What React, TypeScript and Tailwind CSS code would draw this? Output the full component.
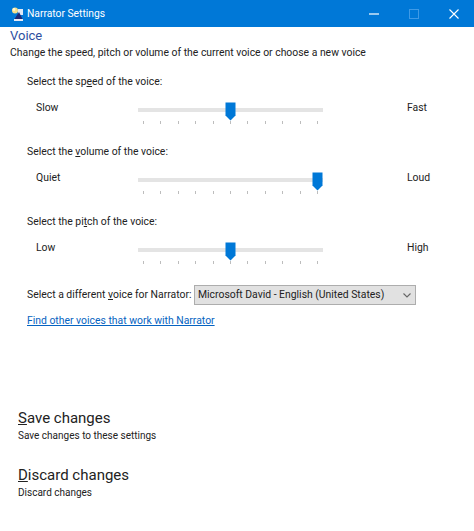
const font = { fontFamily: 'Roboto, "Noto Sans", sans-serif' };

function Thumb({ pct }: { pct: number }) {
  return (
    <svg
      width="11"
      height="19"
      viewBox="0 0 11 19"
      className="absolute top-[-6px] -ml-[5.5px]"
      style={{ left: `${pct}%` }}
    >
      <path d="M0.5 0.5H10.5V13.5L5.5 18.5L0.5 13.5Z" fill="#0078d7" />
    </svg>
  );
}

function SliderRow({ ul, rest, pre, low, high, pct }: { pre: string; ul: string; rest: string; low: string; high: string; pct: number }) {
  return (
    <section className="pl-[27px]">
      <p className="text-[10.4px] leading-[18px] text-[#222]">
        {pre}
        <span className="underline">{ul}</span>
        {rest}
      </p>
      <div className="mt-[6px] flex h-[28px] items-start pl-[9px] text-[10.4px] leading-[16px] text-[#222]">
        <span className="mt-[3px] w-[102px] shrink-0">{low}</span>
        <div className="mt-[11px] w-[185px] shrink-0">
          <div className="relative h-[4px] bg-[#e4e4e4]">
            <Thumb pct={pct} />
          </div>
          <div className="mt-[9px] flex justify-between px-[5px]">
            {[0, 1, 2, 3, 4, 5, 6, 7, 8, 9, 10].map((i) => (
              <span key={i} className="h-[3px] w-px bg-[#bdbdbd]" />
            ))}
          </div>
        </div>
        <span className="ml-[84px] mt-[3px]">{high}</span>
      </div>
    </section>
  );
}

export default function App() {
  return (
    <div className="flex h-[531px] w-[474px] flex-col overflow-hidden bg-white" style={font}>
      <header className="flex h-[27px] shrink-0 items-center bg-[#0078d7] text-white">
        <svg width="16" height="16" viewBox="0 0 16 16" className="ml-[8px]">
          <path d="M10 3h5v6h-5z" fill="#dfe9f7" />
          <circle cx="7" cy="4.5" r="3" fill="#f6e08a" />
          <circle cx="6" cy="3.5" r="1.4" fill="#fff8d8" />
          <path d="M11 6l3.5 7h-8z" fill="#1d2a78" />
          <path d="M6 13h9v2H6z" fill="#e6ebf6" />
        </svg>
        <span className="ml-[3px] text-[10.3px]">Narrator Settings</span>
        <div className="ml-auto flex items-center">
          <svg width="10" height="10" viewBox="0 0 10 10" className="mr-[30px]">
            <path d="M0 5h10" stroke="#fff" strokeWidth="1.2" />
          </svg>
          <svg width="10" height="10" viewBox="0 0 10 10" className="mr-[30px]">
            <rect x="0.5" y="0.5" width="9" height="9" fill="none" stroke="#3f9ae6" />
          </svg>
          <svg width="10" height="10" viewBox="0 0 10 10" className="mr-[15px]">
            <path d="M0.5 0.5l9 9M9.5 0.5l-9 9" stroke="#fff" strokeWidth="1.1" />
          </svg>
        </div>
      </header>

      <main className="flex flex-1 flex-col">
        <div className="pl-[10px]">
          <h1 className="text-[13px] leading-[18px] font-normal text-[#2f4f9f]">Voice</h1>
          <p className="text-[10.4px] leading-[15px] text-[#222]">
            Change the speed, pitch or volume of the current voice or choose a new voice
          </p>
        </div>

        <div className="mt-[13px] flex flex-col gap-[18px]">
          <SliderRow pre="Select the sp" ul="e" rest="ed of the voice:" low="Slow" high="Fast" pct={50} />
          <SliderRow pre="Select the " ul="v" rest="olume of the voice:" low="Quiet" high="Loud" pct={97} />
          <SliderRow pre="Select the pi" ul="t" rest="ch of the voice:" low="Low" high="High" pct={50} />
        </div>

        <div className="mt-[20px] flex items-center pl-[27px] text-[10.4px] text-[#222]">
          <span className="whitespace-nowrap">
            Select a different <span className="underline">v</span>oice for Narrator:
          </span>
          <div className="ml-auto mr-[58px] flex h-[20px] w-[222px] shrink-0 items-center justify-between border border-[#adadad] bg-[#e1e1e1] pl-[3px] pr-[4px]">
            <span className="whitespace-nowrap">Microsoft David - English (United States)</span>
            <svg width="8" height="5" viewBox="0 0 8 5">
              <path d="M0.5 0.5l3.5 3.5 3.5-3.5" fill="none" stroke="#666" strokeWidth="1.1" />
            </svg>
          </div>
        </div>

        <a className="mt-[7px] ml-[27px] text-[10.4px] leading-[18px] text-[#0563c1] underline">
          Find other voices that work with Narrator
        </a>

        <div className="mt-[79px] pl-[18px] text-[#222]">
          <h2 className="text-[15px] leading-[19px] font-normal">
            <span className="underline">S</span>ave changes
          </h2>
          <p className="text-[10px] leading-[15px]">Save changes to these settings</p>
          <h2 className="mt-[23px] text-[15px] leading-[19px] font-normal">
            <span className="underline">D</span>iscard changes
          </h2>
          <p className="text-[10px] leading-[15px]">Discard changes</p>
        </div>
      </main>
    </div>
  );
}
